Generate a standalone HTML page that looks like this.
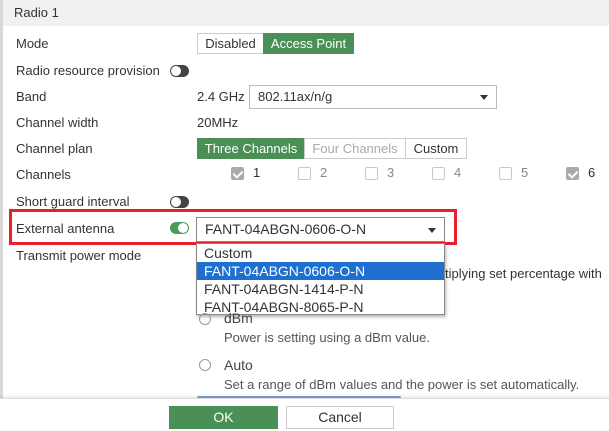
<!DOCTYPE html>
<html><head><meta charset="utf-8"><style>
*{box-sizing:border-box;margin:0;padding:0}
body{width:609px;height:431px;overflow:hidden;background:#fff;font-family:"Liberation Sans",sans-serif;font-size:13px;color:#333;position:relative}
.a{position:absolute;white-space:nowrap}
.hdr{left:0;top:0;width:609px;height:26px;background:#f1f1f1;border-left:3px solid #d8d8d8}
.lbl{left:16px}
.tg{position:absolute;width:19px;height:12px;border-radius:6px;background:#444}
.tg:after{content:"";position:absolute;left:1px;top:1px;width:10px;height:10px;border-radius:50%;background:#fff}
.tg.on{background:#4a9a5a}.tg.on:after{left:8px}
.btn{position:absolute;height:21px;line-height:19px;text-align:center;border:1px solid #ccc;background:#fff}
.g{background:#4a8f55;color:#fff;border-color:#4a8f55}
.cb{position:absolute;width:13px;height:13px;border:1px solid #c8c8c8;border-radius:2px;background:#fff}
.cb.k{background:#aaa;border-color:#aaa}
.cb.k:after{content:"";position:absolute;left:3px;top:1px;width:4px;height:7px;border:solid #fff;border-width:0 2px 2px 0;transform:rotate(45deg)}
.cn{position:absolute;color:#888}
.sel{position:absolute;border:1px solid #bbb;background:#fff;padding-left:8px}
.arr{position:absolute;right:8px;top:9px;border-left:4px solid transparent;border-right:4px solid transparent;border-top:5px solid #333}
.rad{position:absolute;width:12px;height:12px;border:1px solid #999;border-radius:50%}
</style></head><body>
<div class="a hdr"></div>
<div class="a" style="left:0;top:26px;width:3px;height:372px;background:#d8d8d8"></div>
<div class="a" style="left:14px;top:5px">Radio 1</div>
<div class="a lbl" style="top:36px">Mode</div>
<div class="btn" style="left:197px;top:33px;width:67px">Disabled</div>
<div class="btn g" style="left:263px;top:33px;width:91px">Access Point</div>
<div class="a lbl" style="top:63px">Radio resource provision</div>
<div class="tg" style="left:170px;top:65px"></div>
<div class="a lbl" style="top:89px">Band</div>
<div class="a" style="left:197px;top:89px">2.4 GHz</div>
<div class="sel" style="left:249px;top:85px;width:248px;height:24px;line-height:22px">802.11ax/n/g<div class="arr"></div></div>
<div class="a lbl" style="top:115px">Channel width</div>
<div class="a" style="left:197px;top:115px">20MHz</div>
<div class="a lbl" style="top:141px">Channel plan</div>
<div class="btn g" style="left:197px;top:138px;width:108px">Three Channels</div>
<div class="btn" style="left:304px;top:138px;width:102px;color:#aaa">Four Channels</div>
<div class="btn" style="left:405px;top:138px;width:62px">Custom</div>
<div class="a lbl" style="top:167px">Channels</div>
<div class="cb k" style="left:231px;top:167px"></div><div class="cn" style="left:253px;top:165px;color:#333">1</div>
<div class="cb" style="left:298px;top:167px"></div><div class="cn" style="left:320px;top:165px">2</div>
<div class="cb" style="left:365px;top:167px"></div><div class="cn" style="left:387px;top:165px">3</div>
<div class="cb" style="left:432px;top:167px"></div><div class="cn" style="left:454px;top:165px">4</div>
<div class="cb" style="left:499px;top:167px"></div><div class="cn" style="left:521px;top:165px">5</div>
<div class="cb k" style="left:566px;top:167px"></div><div class="cn" style="left:588px;top:165px;color:#333">6</div>
<div class="a lbl" style="top:194px">Short guard interval</div>
<div class="tg" style="left:170px;top:196px"></div>
<div class="a" style="left:9px;top:209px;width:448px;height:36px;border:3px solid #e8202a"></div>
<div class="a lbl" style="top:221px">External antenna</div>
<div class="tg on" style="left:170px;top:222px"></div>
<div class="sel" style="left:196px;top:217px;width:249px;height:25px;line-height:23px;border-color:#888;font-size:14px">FANT-04ABGN-0606-O-N<div class="arr" style="top:10px"></div></div>
<div class="a lbl" style="top:248px">Transmit power mode</div>
<div class="a" style="left:445px;top:266px;font-size:13px">tiplying set percentage with</div>
<div class="a" style="left:196px;top:243px;width:249px;height:72px;border:1px solid #888;background:#fff;box-shadow:1px 2px 3px rgba(0,0,0,.3);font-size:14px;line-height:18px">
<div style="padding-left:7px">Custom</div>
<div style="padding-left:7px;background:#1e6fd0;color:#fff">FANT-04ABGN-0606-O-N</div>
<div style="padding-left:7px">FANT-04ABGN-1414-P-N</div>
<div style="padding-left:7px">FANT-04ABGN-8065-P-N</div>
</div>
<div class="rad" style="left:199px;top:313px"></div>
<div class="a" style="left:224px;top:310px;color:#444;font-size:14px">dBm</div>
<div class="a" style="left:224px;top:330px;color:#555">Power is setting using a dBm value.</div>
<div class="rad" style="left:199px;top:359px"></div>
<div class="a" style="left:224px;top:357px;color:#444;font-size:14px">Auto</div>
<div class="a" style="left:224px;top:377px;color:#555">Set a range of dBm values and the power is set automatically.</div>
<div class="a" style="left:197px;top:396px;width:204px;height:2px;background:#7aa3d8;border-radius:2px"></div>
<div class="a" style="left:0;top:398px;width:609px;height:33px;background:#fff;border-top:1px solid #ddd;box-shadow:0 -2px 3px rgba(0,0,0,.08)"></div>
<div class="btn g" style="left:169px;top:406px;width:109px;height:23px;line-height:21px;font-size:14px">OK</div>
<div class="btn" style="left:286px;top:406px;width:108px;height:23px;line-height:21px;font-size:14px">Cancel</div>
</body></html>
